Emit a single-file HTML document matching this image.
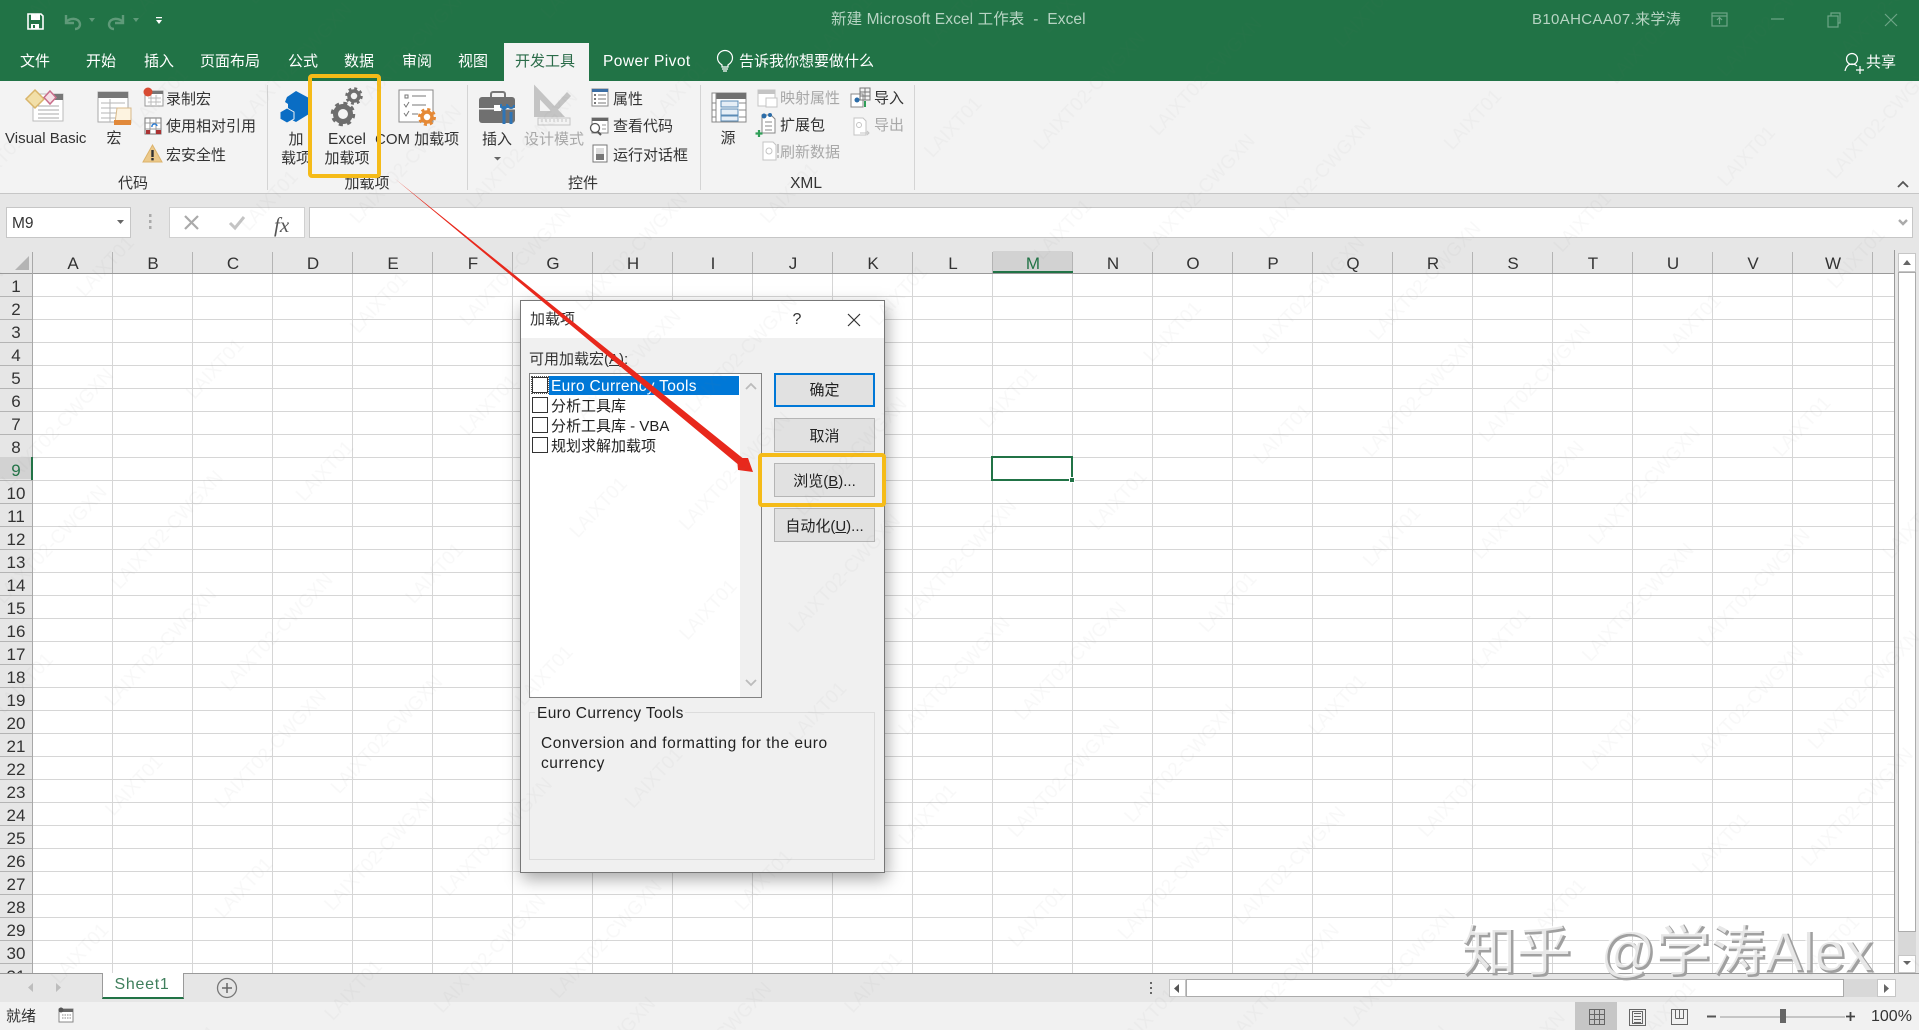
<!DOCTYPE html>
<html lang="zh"><head><meta charset="utf-8"><title>Excel</title>
<style>
html,body{margin:0;padding:0;width:1919px;height:1030px;overflow:hidden;background:#fff}
body{position:relative;font-family:"Liberation Sans","Noto Sans CJK SC",sans-serif;font-size:15px;color:#333}
.a{position:absolute}
.t{position:absolute;line-height:18px;height:18px;white-space:nowrap;margin-top:1px}
.c{transform:translateX(-50%)}
.w{color:#fff}.g{color:#a8a8a8}
.btn{position:absolute;left:774px;width:101px;height:34px;box-sizing:border-box;background:#e1e1e1;border:1px solid #b5b5b5;text-align:center;line-height:35px;font-size:15px;color:#222}
u{text-decoration:underline}
#cols{position:absolute;left:33px;top:252px;height:21px;display:flex}
#cols span{width:80px;text-align:center;font-size:17px;line-height:23px;color:#333}
#rows{position:absolute;left:0;top:274px;width:32px;height:699px;overflow:hidden}
#rows span{display:block;height:23px;text-align:center;font-size:17px;line-height:25px;color:#333}
</style></head><body>
<!-- title / tabs -->
<div class="a" style="left:0;top:0;width:1919px;height:81px;background:#217346"></div>
<div class="a" style="left:504px;top:43px;width:85px;height:38px;background:#f3f3f3"></div>
<span class="t" style="left:831px;top:10px;color:#b7d4c3;font-size:15.5px;letter-spacing:.1px">新建 Microsoft Excel 工作表&nbsp; -&nbsp; Excel</span>
<span class="t" style="left:1532px;top:10px;color:#b7d4c3;font-size:15px;letter-spacing:.35px">B10AHCAA07.来学涛</span>
<span class="t w" style="left:20px;top:52px">文件</span>
<span class="t w" style="left:86px;top:52px">开始</span>
<span class="t w" style="left:144px;top:52px">插入</span>
<span class="t w" style="left:200px;top:52px">页面布局</span>
<span class="t w" style="left:288px;top:52px">公式</span>
<span class="t w" style="left:344px;top:52px">数据</span>
<span class="t w" style="left:402px;top:52px">审阅</span>
<span class="t w" style="left:458px;top:52px">视图</span>
<span class="t" style="left:515px;top:52px;color:#2a6b48">开发工具</span>
<span class="t w" style="left:603px;top:52px;font-size:15.5px;letter-spacing:.45px">Power Pivot</span>
<span class="t w" style="left:739px;top:52px">告诉我你想要做什么</span>
<span class="t w" style="left:1866px;top:53px">共享</span>

<!-- ribbon -->
<div class="a" style="left:0;top:81px;width:1919px;height:113px;background:#f3f3f3;border-bottom:1px solid #c6c6c6;box-sizing:border-box"></div>
<div class="a" style="left:267px;top:85px;width:1px;height:105px;background:#d4d4d4"></div>
<div class="a" style="left:467px;top:85px;width:1px;height:105px;background:#d4d4d4"></div>
<div class="a" style="left:700px;top:85px;width:1px;height:105px;background:#d4d4d4"></div>
<div class="a" style="left:914px;top:85px;width:1px;height:105px;background:#d4d4d4"></div>
<span class="t" style="left:5px;top:129px;font-size:15px">Visual Basic</span>
<span class="t c" style="left:114px;top:129px">宏</span>
<span class="t" style="left:166px;top:90px">录制宏</span>
<span class="t" style="left:166px;top:117px">使用相对引用</span>
<span class="t" style="left:166px;top:146px">宏安全性</span>
<span class="t c" style="left:133px;top:174px">代码</span>
<span class="t c" style="left:296px;top:130px">加</span>
<span class="t c" style="left:296px;top:149px">载项</span>
<span class="t c" style="left:347px;top:130px;font-size:15.5px">Excel</span>
<span class="t c" style="left:347px;top:149px">加载项</span>
<span class="t" style="left:375px;top:130px;font-size:15px">COM 加载项</span>
<span class="t c" style="left:367px;top:174px">加载项</span>
<span class="t c" style="left:497px;top:130px">插入</span>
<span class="t g" style="left:524px;top:130px">设计模式</span>
<span class="t" style="left:613px;top:90px">属性</span>
<span class="t" style="left:613px;top:117px">查看代码</span>
<span class="t" style="left:613px;top:146px">运行对话框</span>
<span class="t c" style="left:583px;top:174px">控件</span>
<span class="t c" style="left:728px;top:129px">源</span>
<span class="t g" style="left:780px;top:89px">映射属性</span>
<span class="t" style="left:780px;top:116px">扩展包</span>
<span class="t g" style="left:780px;top:143px">刷新数据</span>
<span class="t" style="left:874px;top:89px">导入</span>
<span class="t g" style="left:874px;top:116px">导出</span>
<span class="t c" style="left:806px;top:174px;font-size:15.5px">XML</span>

<!-- formula bar -->
<div class="a" style="left:0;top:194px;width:1919px;height:79px;background:#e6e6e6"></div>
<div class="a" style="left:6px;top:207px;width:125px;height:31px;background:#fff;border:1px solid #c6c6c6;box-sizing:border-box"></div>
<div class="a" style="left:169px;top:207px;width:136px;height:31px;background:#fff;border:1px solid #d0d0d0;box-sizing:border-box"></div>
<div class="a" style="left:309px;top:207px;width:1604px;height:31px;background:#fff;border:1px solid #c6c6c6;box-sizing:border-box"></div>
<span class="t" style="left:12px;top:214px;font-size:15.5px">M9</span>
<span class="t" style="left:274px;top:212px;font:italic 21px 'Liberation Serif',serif;color:#555">fx</span>

<!-- sheet -->
<div class="a" style="left:0;top:250px;width:33px;height:723px;background:#e6e6e6"></div>
<div class="a" style="left:33px;top:252px;width:1861px;height:21px;background:repeating-linear-gradient(90deg,#e6e6e6 0 79px,#b4b4b4 79px 80px)"></div>
<div class="a" style="left:0;top:274px;width:32px;height:699px;background:repeating-linear-gradient(180deg,#e6e6e6 0 22px,#b4b4b4 22px 23px)"></div>
<div class="a" style="left:33px;top:274px;width:1861px;height:699px;background:repeating-linear-gradient(90deg,transparent 0 79px,#d6d6d6 79px 80px),repeating-linear-gradient(180deg,#fff 0 22px,#d6d6d6 22px 23px)"></div>
<div class="a" style="left:0;top:273px;width:1894px;height:1px;background:#9a9a9a"></div>
<div class="a" style="left:32px;top:252px;width:1px;height:721px;background:#a8a8a8"></div>
<div class="a" style="left:1894px;top:250px;width:1px;height:723px;background:#9a9a9a"></div>
<div class="a" style="left:993px;top:251px;width:79px;height:20px;background:#d2d2d2"></div>
<div class="a" style="left:993px;top:271px;width:80px;height:2px;background:#217346"></div>
<div class="a" style="left:0;top:457px;width:31px;height:22px;background:#d2d2d2"></div>
<div class="a" style="left:31px;top:457px;width:2px;height:23px;background:#217346"></div>
<div id="cols"><span>A</span><span>B</span><span>C</span><span>D</span><span>E</span><span>F</span><span>G</span><span>H</span><span>I</span><span>J</span><span>K</span><span>L</span><span style="color:#217346">M</span><span>N</span><span>O</span><span>P</span><span>Q</span><span>R</span><span>S</span><span>T</span><span>U</span><span>V</span><span>W</span></div>
<div id="rows"><span>1</span><span>2</span><span>3</span><span>4</span><span>5</span><span>6</span><span>7</span><span>8</span><span style="color:#217346">9</span><span>10</span><span>11</span><span>12</span><span>13</span><span>14</span><span>15</span><span>16</span><span>17</span><span>18</span><span>19</span><span>20</span><span>21</span><span>22</span><span>23</span><span>24</span><span>25</span><span>26</span><span>27</span><span>28</span><span>29</span><span>30</span><span>31</span></div>
<!-- selected cell -->
<div class="a" style="left:991px;top:456px;width:82px;height:25px;box-sizing:border-box;border:2px solid #217346"></div>
<div class="a" style="left:1069px;top:477px;width:6px;height:6px;background:#217346;border:1px solid #fff;box-sizing:border-box"></div>

<!-- scrollbars right -->
<div class="a" style="left:1895px;top:250px;width:24px;height:723px;background:#e6e6e6"></div>
<div class="a" style="left:1898px;top:253px;width:18px;height:19px;background:#fff;border:1px solid #c6c6c6;box-sizing:border-box"></div>
<div class="a" style="left:1898px;top:272px;width:18px;height:660px;background:#fff;border:1px solid #ababab;box-sizing:border-box"></div>
<div class="a" style="left:1898px;top:932px;width:18px;height:23px;background:#d8d8d8"></div>
<div class="a" style="left:1898px;top:955px;width:18px;height:18px;background:#fff;border:1px solid #c6c6c6;box-sizing:border-box"></div>

<!-- tabs bar -->
<div class="a" style="left:0;top:973px;width:1919px;height:29px;background:#e6e6e6;border-top:1px solid #9a9a9a;box-sizing:border-box"></div>
<div class="a" style="left:102px;top:973px;width:82px;height:26px;background:#fff;border-left:1px solid #9a9a9a;border-right:1px solid #9a9a9a;border-bottom:2px solid #217346;box-sizing:border-box"></div>
<span class="t c" style="left:142px;top:975px;color:#3f7f5c;font-size:16px;letter-spacing:.7px">Sheet1</span>
<div class="a" style="left:1169px;top:979px;width:17px;height:18px;background:#fff;border:1px solid #c6c6c6;box-sizing:border-box"></div>
<div class="a" style="left:1186px;top:979px;width:658px;height:18px;background:#fff;border:1px solid #ababab;box-sizing:border-box"></div>
<div class="a" style="left:1844px;top:979px;width:33px;height:18px;background:#d8d8d8"></div>
<div class="a" style="left:1877px;top:979px;width:19px;height:18px;background:#fff;border:1px solid #c6c6c6;box-sizing:border-box"></div>

<!-- status bar -->
<div class="a" style="left:0;top:1002px;width:1919px;height:28px;background:#f1f1f1"></div>
<div class="a" style="left:1575px;top:1002px;width:42px;height:28px;background:#c6c6c6"></div>
<span class="t" style="left:6px;top:1007px;font-size:15px">就绪</span>
<span class="t" style="left:1871px;top:1007px;font-size:16px">100%</span>

<!-- dialog -->
<div class="a" style="left:520px;top:300px;width:365px;height:573px;box-sizing:border-box;background:#f0f0f0;border:1px solid #777;box-shadow:2px 6px 16px rgba(0,0,0,.35)">
<div class="a" style="left:0;top:0;width:363px;height:37px;background:#fff"></div>
</div>
<span class="t" style="left:530px;top:310px;font-size:15px">加载项</span>
<span class="t c" style="left:797px;top:310px;font-size:16px">?</span>
<span class="t" style="left:529px;top:350px;font-size:15px">可用加载宏(<u>A</u>):</span>
<div class="a" style="left:529px;top:373px;width:233px;height:325px;box-sizing:border-box;background:#fff;border:1px solid #828282"></div>
<div class="a" style="left:740px;top:374px;width:21px;height:323px;background:#f0f0f0"></div>
<div class="a" style="left:549px;top:376px;width:190px;height:19px;background:#0078d7"></div>
<span class="t" style="left:551px;top:377px;color:#fff;font-size:15.5px;letter-spacing:.3px">Euro Currency Tools</span>
<span class="t" style="left:551px;top:397px;font-size:15px;color:#222">分析工具库</span>
<span class="t" style="left:551px;top:417px;font-size:15px;color:#222">分析工具库 - VBA</span>
<span class="t" style="left:551px;top:437px;font-size:15px;color:#222">规划求解加载项</span>
<div class="a" style="left:532px;top:377px;width:16px;height:16px;box-sizing:border-box;background:#fff;border:1px solid #333;outline:1px dotted #555"></div>
<div class="a" style="left:532px;top:397px;width:16px;height:16px;box-sizing:border-box;background:#fff;border:1px solid #333"></div>
<div class="a" style="left:532px;top:417px;width:16px;height:16px;box-sizing:border-box;background:#fff;border:1px solid #333"></div>
<div class="a" style="left:532px;top:437px;width:16px;height:16px;box-sizing:border-box;background:#fff;border:1px solid #333"></div>
<div class="btn" style="top:373px;border:2px solid #0078d7;line-height:31px">确定</div>
<div class="btn" style="top:418px">取消</div>
<div class="btn" style="top:463px">浏览(<u>B</u>)...</div>
<div class="btn" style="top:508px">自动化(<u>U</u>)...</div>
<div class="a" style="left:529px;top:712px;width:346px;height:148px;box-sizing:border-box;border:1px solid #dcdcdc"></div>
<div class="a" style="left:535px;top:708px;width:150px;height:10px;background:#f0f0f0"></div>
<span class="t" style="left:537px;top:704px;font-size:15.5px;letter-spacing:.35px;color:#222">Euro Currency Tools</span>
<span class="t" style="left:541px;top:734px;font-size:15.5px;letter-spacing:.56px;color:#222">Conversion and formatting for the euro</span>
<span class="t" style="left:541px;top:754px;font-size:15.5px;letter-spacing:.56px;color:#222">currency</span>

<!-- all icons -->
<svg class="a" style="left:0;top:0" width="1919" height="1030" viewBox="0 0 1919 1030">
<!-- QAT -->
<g fill="none" stroke="#fff" stroke-width="1.600"><path d="M28 14h13l2 2v13H28z"/></g>
<rect x="31" y="14" width="9" height="6" fill="#fff"/><rect x="31" y="24" width="8" height="5" fill="#fff"/><rect x="33" y="25" width="2" height="3" fill="#217346"/>
<g fill="none" stroke="#5f9a79" stroke-width="2.400"><path d="M66 22c3-4 13-5 14 2 0 3-2 5-5 5"/><path d="M66 15v8h8"/><path d="M123 22c-3-4-13-5-14 2 0 3 2 5 5 5"/><path d="M123 15v8h-8"/></g>
<path d="M89 18h6l-3 4zM133 18h6l-3 4z" fill="#5f9a79"/>
<path d="M156 17h6v1.300h-6zM156 20h6l-3 4z" fill="#fff"/>
<!-- window buttons -->
<g fill="none" stroke="#6da587" stroke-width="1.200">
<rect x="1712" y="13" width="15" height="13"/><path d="M1712 16h15M1719.500 24v-6M1717 20l2.500-2.500 2.500 2.500"/>
<path d="M1771 19h13"/><rect x="1828" y="16" width="10" height="11"/><path d="M1831 16v-3h9v10h-2"/>
<path d="M1885 14l12 12M1897 14l-12 12"/></g>
<!-- bulb -->
<g fill="none" stroke="#fff" stroke-width="1.200"><path d="M722 65c-3-2-4.500-4-4.500-7a7.500 7.500 0 0 1 15 0c0 3-1.500 5-4.500 7v2h-6z"/><path d="M722 69h6M723 71h4"/></g>
<!-- share -->
<g fill="none" stroke="#fff" stroke-width="1.200"><circle cx="1852" cy="59" r="5.500"/><path d="M1845 71c1-4 3-7 7-7 2 0 4 1 5 2M1856 70h8M1860 66v8"/></g>
<!-- VB -->
<rect x="33" y="94" width="30" height="27" fill="#fff" stroke="#bbb"/><rect x="54" y="94" width="9" height="6" fill="#777"/>
<g stroke="#aaa"><path d="M38 106h21M38 110h21M38 114h21M38 118h21"/></g>
<path d="M35 90l9 9-9 9-9-9z" fill="#f2dfa8" stroke="#d9b56a" stroke-width="1.500"/>
<path d="M50 91l6 6.500-6 6.500-6-6.500z" fill="#f5e0e6" stroke="#c96d8a" stroke-width="1.500"/>
<!-- macro -->
<rect x="98" y="92" width="30" height="30" fill="#fff" stroke="#aaa"/><rect x="98" y="92" width="30" height="6" fill="#777"/>
<g stroke="#b5b5b5"><path d="M101 103h24M101 108h24M101 113h24M101 118h24M110 99v23"/></g>
<path d="M117 108h14v15h-16z" fill="#fdf3e0" stroke="#d8b98a"/><rect x="114" y="120" width="17" height="5" fill="#e1893a"/>
<!-- record -->
<rect x="145" y="91" width="18" height="15" fill="#fff" stroke="#999"/><rect x="145" y="91" width="18" height="3" fill="#777"/>
<g stroke="#bbb"><path d="M148 98h13M148 102h13M151 95v10M156 95v10"/></g><circle cx="148" cy="92" r="4.500" fill="#d84b32"/>
<!-- relative -->
<rect x="145" y="118" width="16" height="16" fill="#fff" stroke="#777"/>
<g stroke="#999"><path d="M150 118v16M156 118v16M145 123h16M145 129h16"/></g>
<rect x="146" y="130" width="4" height="4" fill="#a33"/><rect x="156" y="130" width="5" height="4" fill="#a33"/>
<path d="M152 127a2.500 2.500 0 0 1 5-1" fill="none" stroke="#2b7cd3" stroke-width="1.500"/>
<!-- warning -->
<path d="M152.500 145l9.500 17h-19z" fill="#ecc98a" stroke="#dcb36b"/><rect x="151.300" y="150" width="2.400" height="7" fill="#333"/><rect x="151.300" y="158" width="2.400" height="2.400" fill="#333"/>
<!-- addins hex -->
<path d="M296 91l13 7v16l-13 8-8-4V104l-3-2 2-5z" fill="#0a6dc4"/>
<path d="M287 108l7 4v7l-7 4-7-4v-7z" fill="#0a6dc4" stroke="#f3f3f3"/>
<!-- gears -->
<g fill="none" stroke="#6e6e6e">
<circle cx="343" cy="114" r="7.500" stroke-width="5"/><circle cx="343" cy="114" r="10.500" stroke-width="3.500" stroke-dasharray="4 4.250"/>
<circle cx="354" cy="96" r="5" stroke-width="3.500"/><circle cx="354" cy="96" r="7.500" stroke-width="2.500" stroke-dasharray="2.900 2.990"/></g>
<!-- COM -->
<rect x="399" y="90" width="34" height="32" fill="#fff" stroke="#888"/>
<g stroke="#777" fill="none"><rect x="405" y="95" width="3" height="3"/><path d="M412 96h14M412 105h14M412 114h6M404 104l2 3 3-5M404 113l2 3 3-5"/></g>
<g fill="none" stroke="#e58936"><circle cx="427" cy="117" r="5" stroke-width="3.500"/><circle cx="427" cy="117" r="7.500" stroke-width="3" stroke-dasharray="3 2.890"/></g>
<!-- toolbox -->
<path d="M491 98v-4a2 2 0 0 1 2-2h10a2 2 0 0 1 2 2v4" fill="none" stroke="#777" stroke-width="2"/>
<rect x="479" y="97" width="36" height="26" rx="3" fill="#707070"/><rect x="479" y="108" width="36" height="1.500" fill="#f3f3f3"/><rect x="494" y="105" width="7" height="6" fill="#fff"/>
<g fill="none" stroke="#2e75b6" stroke-width="3"><path d="M504 106v18M511 112v12"/><path d="M501 104v3l3 2 3-2v-3M508 105c0 4 6 4 6 0" stroke-width="2"/></g>
<path d="M494 157h7l-3.500 3.500z" fill="#666"/>
<!-- design -->
<g fill="none" stroke="#c4c4c4"><path d="M537 92v22h21z" stroke-width="6"/><path d="M548 113l19-21 4 4-18 19z" fill="#c4c4c4" stroke="none"/><rect x="538" y="118" width="32" height="7"/><path d="M542 119v3M546 119v3M550 119v3M554 119v3M558 119v3M562 119v3M566 119v3"/></g>
<!-- properties -->
<rect x="592" y="89" width="16" height="17" fill="#fff" stroke="#888"/><rect x="592" y="89" width="16" height="3" fill="#3a6ea5"/>
<g stroke="#777"><path d="M598 95h8M598 99h8M598 103h8"/></g><g fill="#777"><rect x="594" y="94" width="2" height="2"/><rect x="594" y="98" width="2" height="2"/><rect x="594" y="102" width="2" height="2"/></g>
<!-- view code -->
<rect x="592" y="118" width="16" height="15" fill="#fff" stroke="#888"/><rect x="592" y="118" width="16" height="3" fill="#666"/>
<g stroke="#999"><path d="M602 125h4M602 129h4"/></g>
<circle cx="595" cy="128" r="4.500" fill="#fff" stroke="#555" stroke-width="1.300"/><path d="M598 132l3 3" stroke="#555" stroke-width="2"/>
<!-- run dialog -->
<rect x="593" y="145" width="14" height="17" fill="#fff" stroke="#777"/><rect x="596" y="148" width="8" height="6" fill="#ddd"/><rect x="596" y="154" width="8" height="6" fill="#777"/>
<!-- source -->
<rect x="712" y="93" width="34" height="29" fill="#fff" stroke="#888"/><rect x="716" y="93" width="30" height="6" fill="#707070"/>
<g stroke="#888"><path d="M716 93v29M712 103h4M712 110h4M712 117h4M739 103h7M739 110h7M739 117h7"/></g>
<g fill="#e5eef6" stroke="#5a8bb5"><rect x="721" y="101" width="17" height="6"/><rect x="721" y="109" width="17" height="6"/><rect x="721" y="116" width="17" height="5"/></g>
<!-- xml small -->
<g fill="#fff" stroke="#c4c4c4"><rect x="758" y="90" width="17" height="16"/><rect x="766" y="98" width="11" height="9"/></g><rect x="758" y="90" width="17" height="4" fill="#c4c4c4"/>
<path d="M762 115h9l4 4v14h-13z" fill="#fff" stroke="#888"/><g stroke="#888"><path d="M765 122h7M765 126h7M765 130h7"/></g><circle cx="764" cy="116" r="2.500" fill="#2b6ca8"/><circle cx="770" cy="115" r="2" fill="#2b6ca8"/><path d="M759 130v7M755.500 133.500h7" stroke="#2f9e57" stroke-width="2.200"/>
<path d="M763 142h10l3 3v15h-13z" fill="#fff" stroke="#c4c4c4"/><circle cx="769" cy="151" r="3" fill="none" stroke="#c4c4c4"/><rect x="777" y="144" width="2" height="9" fill="#c4c4c4"/><rect x="777" y="155" width="2" height="3" fill="#c4c4c4"/>
<path d="M851 94h12v13h-12z" fill="#fff" stroke="#888"/><g fill="none" stroke="#777"><rect x="860" y="88" width="10" height="12"/><path d="M860 92h10M860 96h10M865 88v12"/></g><circle cx="857" cy="100" r="2.500" fill="#2b6ca8"/><path d="M865 107v-6" stroke="#2f9e57" stroke-width="2"/>
<path d="M854 118h9l3 3v14h-12z" fill="#fff" stroke="#c4c4c4"/><circle cx="859" cy="125" r="2.500" fill="none" stroke="#c4c4c4"/><path d="M860 133h9m-2-2l2 2-2 2" fill="none" stroke="#c4c4c4"/>
<!-- chevron -->
<path d="M1898 187l5-5 5 5" fill="none" stroke="#555" stroke-width="1.800"/>
<!-- formula bar -->
<path d="M117 220h7l-3.500 4z" fill="#666"/>
<g fill="#aaa"><rect x="149" y="214" width="2.500" height="3"/><rect x="149" y="220" width="2.500" height="3"/><rect x="149" y="226" width="2.500" height="3"/></g>
<path d="M185 216l13 13M198 216l-13 13" stroke="#aaa" stroke-width="2.200"/>
<path d="M230 223l5 5 9-11" fill="none" stroke="#c4c4c4" stroke-width="3"/>
<path d="M1899 220l4 4 4-4" fill="none" stroke="#aaa" stroke-width="2.400"/>
<!-- corner -->
<path d="M15 270h14v-14z" fill="#b4b4b4"/>
<!-- scroll arrows -->
<path d="M1903 265l4-5 4 5z" fill="#666"/>
<path d="M1903 961h8l-4 4z" fill="#666"/><path d="M1884 984l5 4.500-5 4.500z" fill="#666"/><path d="M1179 984l-5 4.500 5 4.500z" fill="#555"/>
<path d="M33 983l-5 4.500 5 4.500zM56 983l5 4.500-5 4.500z" fill="#bdbdbd"/>
<circle cx="227" cy="988" r="9.500" fill="none" stroke="#777" stroke-width="1.300"/><path d="M222 988h10M227 983v10" stroke="#666" stroke-width="1.500"/>
<g fill="#666"><rect x="1150" y="982" width="2" height="2"/><rect x="1150" y="987" width="2" height="2"/><rect x="1150" y="992" width="2" height="2"/></g>
<!-- macro status icon -->
<rect x="59" y="1009" width="14" height="13" fill="#fff" stroke="#888"/><rect x="59" y="1009" width="14" height="3" fill="#666"/><circle cx="61" cy="1010" r="2.500" fill="#555"/>
<g stroke="#888"><path d="M62 1015h9M62 1018h9" stroke-dasharray="1.500 1"/></g>
<!-- view icons -->
<g fill="none" stroke="#666"><path d="M1589.500 1009.500h15v15h-15zM1594.500 1009.500v15M1599.500 1009.500v15M1589.500 1014.500h15M1589.500 1019.500h15"/>
<path d="M1629.500 1009.500h16v16h-16zM1634 1013.500h7M1634 1016.500h7M1634 1019.500h7M1634 1022.500h7M1632.500 1011.500h10v12h-10z"/>
<path d="M1671.500 1009.500h16v15h-16zM1679.500 1009.500v9M1675.500 1009.500v9M1675.500 1018.500h8v-9"/></g>
<rect x="1707" y="1015.500" width="9" height="2" fill="#555"/><rect x="1720" y="1016.500" width="125" height="1" fill="#999"/><rect x="1780" y="1009" width="6" height="14" fill="#666"/>
<path d="M1846 1016.500h9M1850.500 1012v9" stroke="#444" stroke-width="1.800"/>
<!-- dialog chrome -->
<path d="M848 314l12 12M860 314l-12 12" stroke="#333" stroke-width="1.200"/>
<path d="M746 389l5-5 5 5M746 680l5 5 5-5" fill="none" stroke="#bbb" stroke-width="1.800"/>
<!-- orange boxes -->
<rect x="310" y="76" width="69" height="100" rx="2" fill="none" stroke="#f5bb18" stroke-width="4"/>
<rect x="760" y="455" width="124" height="50" rx="2" fill="none" stroke="#f5bb18" stroke-width="4"/>
<!-- red arrow -->
<polygon points="394,178 742.500,458 748,458 753,472 738,470 737.500,464" fill="#e8281c"/>
<!-- watermark text -->
<defs><pattern id="wm" width="520" height="150" patternUnits="userSpaceOnUse" patternTransform="rotate(-47)">
<text x="0" y="40" font-family="Liberation Sans,sans-serif" font-size="19" fill="#777">LAIXT01</text>
<text x="170" y="40" font-family="Liberation Sans,sans-serif" font-size="19" fill="#777">LAIXT02-CWGXN</text>
<text x="80" y="115" font-family="Liberation Sans,sans-serif" font-size="19" fill="#777">LAIXT02-CWGXN</text>
<text x="360" y="115" font-family="Liberation Sans,sans-serif" font-size="19" fill="#777">LAIXT01</text>
</pattern></defs>
<rect x="0" y="81" width="1919" height="949" fill="url(#wm)" opacity=".05"/>
<rect x="0" y="0" width="1919" height="81" fill="url(#wm)" opacity=".03"/>
</svg>
<!-- zhihu watermark -->
<span class="a" style="left:1463px;top:921px;font-size:55px;line-height:64px;white-space:nowrap;word-spacing:13px;color:#a0a0a0;-webkit-text-stroke:1px #a0a0a0;font-family:'Liberation Sans','Noto Sans CJK SC',sans-serif">知乎 @学涛Alex</span>
<span class="a" style="left:1461px;top:919px;font-size:55px;line-height:64px;white-space:nowrap;word-spacing:13px;color:rgba(255,255,255,.75);font-family:'Liberation Sans','Noto Sans CJK SC',sans-serif">知乎 @学涛Alex</span>
</body></html>
